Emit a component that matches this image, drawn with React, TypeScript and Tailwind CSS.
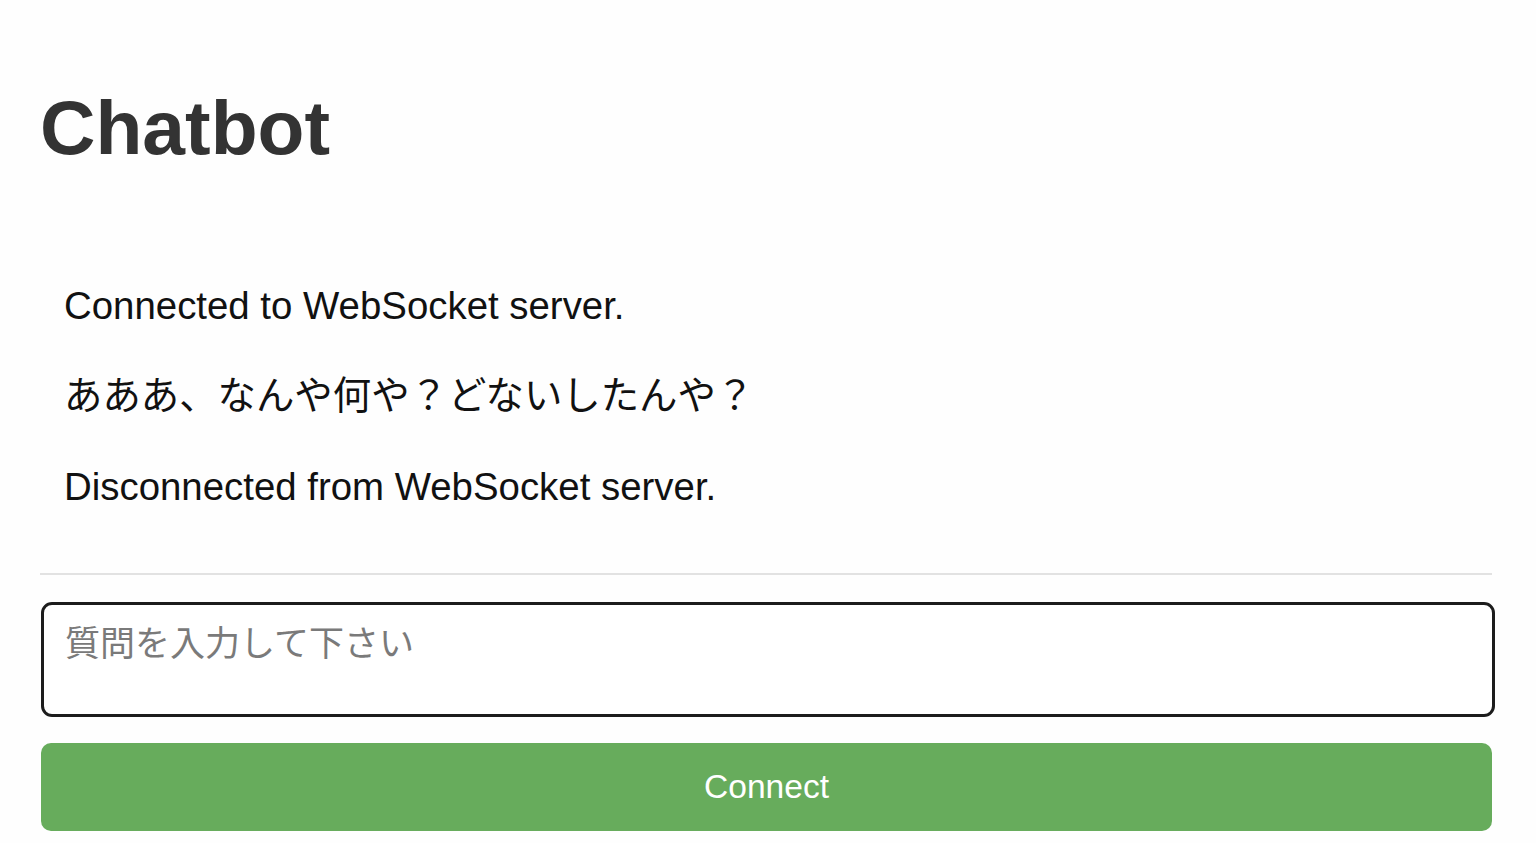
import React from 'react';

const messages = [
  'Connected to WebSocket server.',
  'あああ、なんや何や？どないしたんや？',
  'Disconnected from WebSocket server.',
];

export default function App() {
  return (
    <div
      className="min-h-screen bg-[#fefefe]"
      style={{ fontFamily: '"Liberation Sans", Arial, "Noto Sans CJK JP", sans-serif' }}
    >
      <div className="pl-[40px] pr-[44px] pt-[84px] pb-[12px]">
        <h1 className="text-[76.8px] font-bold leading-[86px] text-[#333]">Chatbot</h1>

        <div className="mt-[90px] pl-[24px]">
          {messages.map((m, i) => (
            <div key={i} className="h-[90.5px] flex items-center">
              <span className="text-[38.4px] leading-[43px] text-[#111]">{m}</span>
            </div>
          ))}
        </div>

        <div className="mt-[41px] h-[2px] bg-[#e2e2e2]" />

        <textarea
          placeholder="質問を入力して下さい"
          className="mt-[27px] ml-[1px] block w-[calc(100%+2px)] h-[115px] resize-none rounded-[11px] border-[3px] border-[#1c1c1c] bg-white pl-[21px] pr-[20px] pt-[17px] text-[35px] leading-[43px] text-[#111] placeholder:text-[#7a7a7a] outline-none"
        />

        <button className="mt-[26px] ml-[1px] w-[calc(100%-1px)] h-[88px] rounded-[10px] bg-[#67ac5c] text-white text-[33.6px] leading-[40px] flex items-center justify-center">
          Connect
        </button>
      </div>
    </div>
  );
}
